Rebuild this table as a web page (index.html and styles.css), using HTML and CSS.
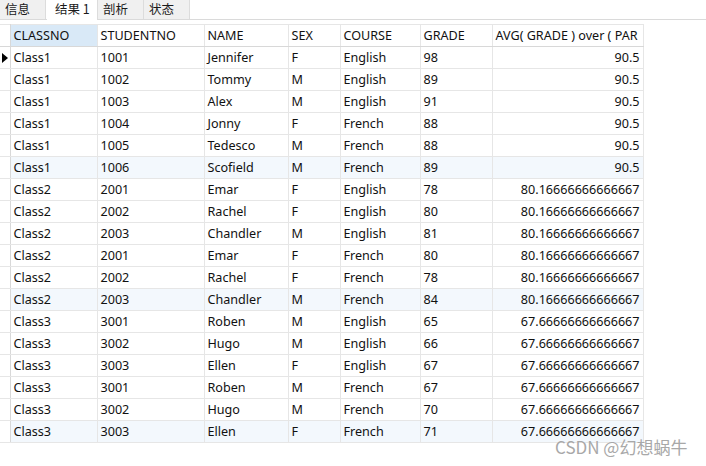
FILE: index.html
```html
<!DOCTYPE html>
<html>
<head>
<meta charset="utf-8">
<link rel="stylesheet" href="styles.css">
</head>
<body>
<div class="tabs">
  <div class="tab">信息</div>
  <div class="tab active">结果 1</div>
  <div class="tab">剖析</div>
  <div class="tab">状态</div>
</div>
<table class="grid">
  <colgroup>
    <col style="width:10px"><col style="width:87px"><col style="width:107px"><col style="width:84px"><col style="width:52px"><col style="width:80px"><col style="width:72px"><col style="width:151px">
  </colgroup>
  <thead>
    <tr><th class="ind"></th><th class="sel">CLASSNO</th><th>STUDENTNO</th><th>NAME</th><th>SEX</th><th>COURSE</th><th>GRADE</th><th>AVG( GRADE ) over ( PAR</th></tr>
  </thead>
  <tbody>
    <tr><td class="ind"><span class="arrow"></span></td><td>Class1</td><td>1001</td><td>Jennifer</td><td>F</td><td>English</td><td>98</td><td class="num">90.5</td></tr>
    <tr><td class="ind"></td><td>Class1</td><td>1002</td><td>Tommy</td><td>M</td><td>English</td><td>89</td><td class="num">90.5</td></tr>
    <tr><td class="ind"></td><td>Class1</td><td>1003</td><td>Alex</td><td>M</td><td>English</td><td>91</td><td class="num">90.5</td></tr>
    <tr><td class="ind"></td><td>Class1</td><td>1004</td><td>Jonny</td><td>F</td><td>French</td><td>88</td><td class="num">90.5</td></tr>
    <tr><td class="ind"></td><td>Class1</td><td>1005</td><td>Tedesco</td><td>M</td><td>French</td><td>88</td><td class="num">90.5</td></tr>
    <tr class="tint"><td class="ind"></td><td>Class1</td><td>1006</td><td>Scofield</td><td>M</td><td>French</td><td>89</td><td class="num">90.5</td></tr>
    <tr><td class="ind"></td><td>Class2</td><td>2001</td><td>Emar</td><td>F</td><td>English</td><td>78</td><td class="num">80.16666666666667</td></tr>
    <tr><td class="ind"></td><td>Class2</td><td>2002</td><td>Rachel</td><td>F</td><td>English</td><td>80</td><td class="num">80.16666666666667</td></tr>
    <tr><td class="ind"></td><td>Class2</td><td>2003</td><td>Chandler</td><td>M</td><td>English</td><td>81</td><td class="num">80.16666666666667</td></tr>
    <tr><td class="ind"></td><td>Class2</td><td>2001</td><td>Emar</td><td>F</td><td>French</td><td>80</td><td class="num">80.16666666666667</td></tr>
    <tr><td class="ind"></td><td>Class2</td><td>2002</td><td>Rachel</td><td>F</td><td>French</td><td>78</td><td class="num">80.16666666666667</td></tr>
    <tr class="tint"><td class="ind"></td><td>Class2</td><td>2003</td><td>Chandler</td><td>M</td><td>French</td><td>84</td><td class="num">80.16666666666667</td></tr>
    <tr><td class="ind"></td><td>Class3</td><td>3001</td><td>Roben</td><td>M</td><td>English</td><td>65</td><td class="num">67.66666666666667</td></tr>
    <tr><td class="ind"></td><td>Class3</td><td>3002</td><td>Hugo</td><td>M</td><td>English</td><td>66</td><td class="num">67.66666666666667</td></tr>
    <tr><td class="ind"></td><td>Class3</td><td>3003</td><td>Ellen</td><td>F</td><td>English</td><td>67</td><td class="num">67.66666666666667</td></tr>
    <tr><td class="ind"></td><td>Class3</td><td>3001</td><td>Roben</td><td>M</td><td>French</td><td>67</td><td class="num">67.66666666666667</td></tr>
    <tr><td class="ind"></td><td>Class3</td><td>3002</td><td>Hugo</td><td>M</td><td>French</td><td>70</td><td class="num">67.66666666666667</td></tr>
    <tr class="tint"><td class="ind"></td><td>Class3</td><td>3003</td><td>Ellen</td><td>F</td><td>French</td><td>71</td><td class="num">67.66666666666667</td></tr>
  </tbody>
</table>
<div class="watermark">CSDN @幻想蜗牛</div>
</body>
</html>
```
FILE: styles.css
```css
html, body {
  margin: 0;
  padding: 0;
  background: #ffffff;
}
body {
  width: 706px;
  height: 466px;
  position: relative;
  overflow: hidden;
  font-family: "Noto Sans CJK SC", "Noto Sans", sans-serif;
  font-size: 12px;
  color: #000;
}
.tabs {
  display: flex;
  height: 19px;
  border-bottom: 1px solid #dadada;
  box-sizing: content-box;
}
.tab {
  height: 19px;
  box-sizing: border-box;
  padding: 0 0 0 5px;
  width: 46px;
  background: #f0f0f0;
  border-right: 1px solid #dcdcdc;
  line-height: 17px;
  font-size: 12.5px;
  color: #1a1a1a;
}
.tab.active {
  background: #ffffff;
  width: 51px;
  padding-left: 8px;
  margin-left: 1px;
  height: 20px;
  border-right: 1px solid #dcdcdc;
}
.grid {
  margin-top: 4px;
  border-collapse: collapse;
  table-layout: fixed;
  width: 643px;
  font-family: "Noto Sans", "Noto Sans CJK SC", sans-serif;
  font-size: 12.6px;
}
.grid th, .grid td {
  height: 21px;
  padding: 0 3px;
  border: 1px solid #e6e6e6;
  border-top: none;
  text-align: left;
  font-weight: normal;
  white-space: nowrap;
  overflow: hidden;
  line-height: 21px;
  color: #111;
}
.grid th {
  border-bottom: 1px solid #d8d8d8;
  border-top: 1px solid #e6e6e6;
}
.grid th.sel {
  background: #d9e9f7;
}
.grid .ind {
  padding: 0;
  position: relative;
  border-left: none;
  border-right: 1px solid #d8d8d8;
}
.grid td.num {
  text-align: right;
  padding-right: 3px;
}
.grid tr.tint td:not(.ind) {
  background: #f3f8fd;
}
.arrow {
  display: block;
  width: 0;
  height: 0;
  margin-left: 2px;
  border-top: 5px solid transparent;
  border-bottom: 5px solid transparent;
  border-left: 6px solid #000;
}
.watermark {
  position: absolute;
  left: 555px;
  top: 434px;
  font-family: "Noto Sans CJK SC", sans-serif;
  font-size: 17px;
  color: #a8a8a8;
  text-shadow: 0 0 1px #fff;
}
```
